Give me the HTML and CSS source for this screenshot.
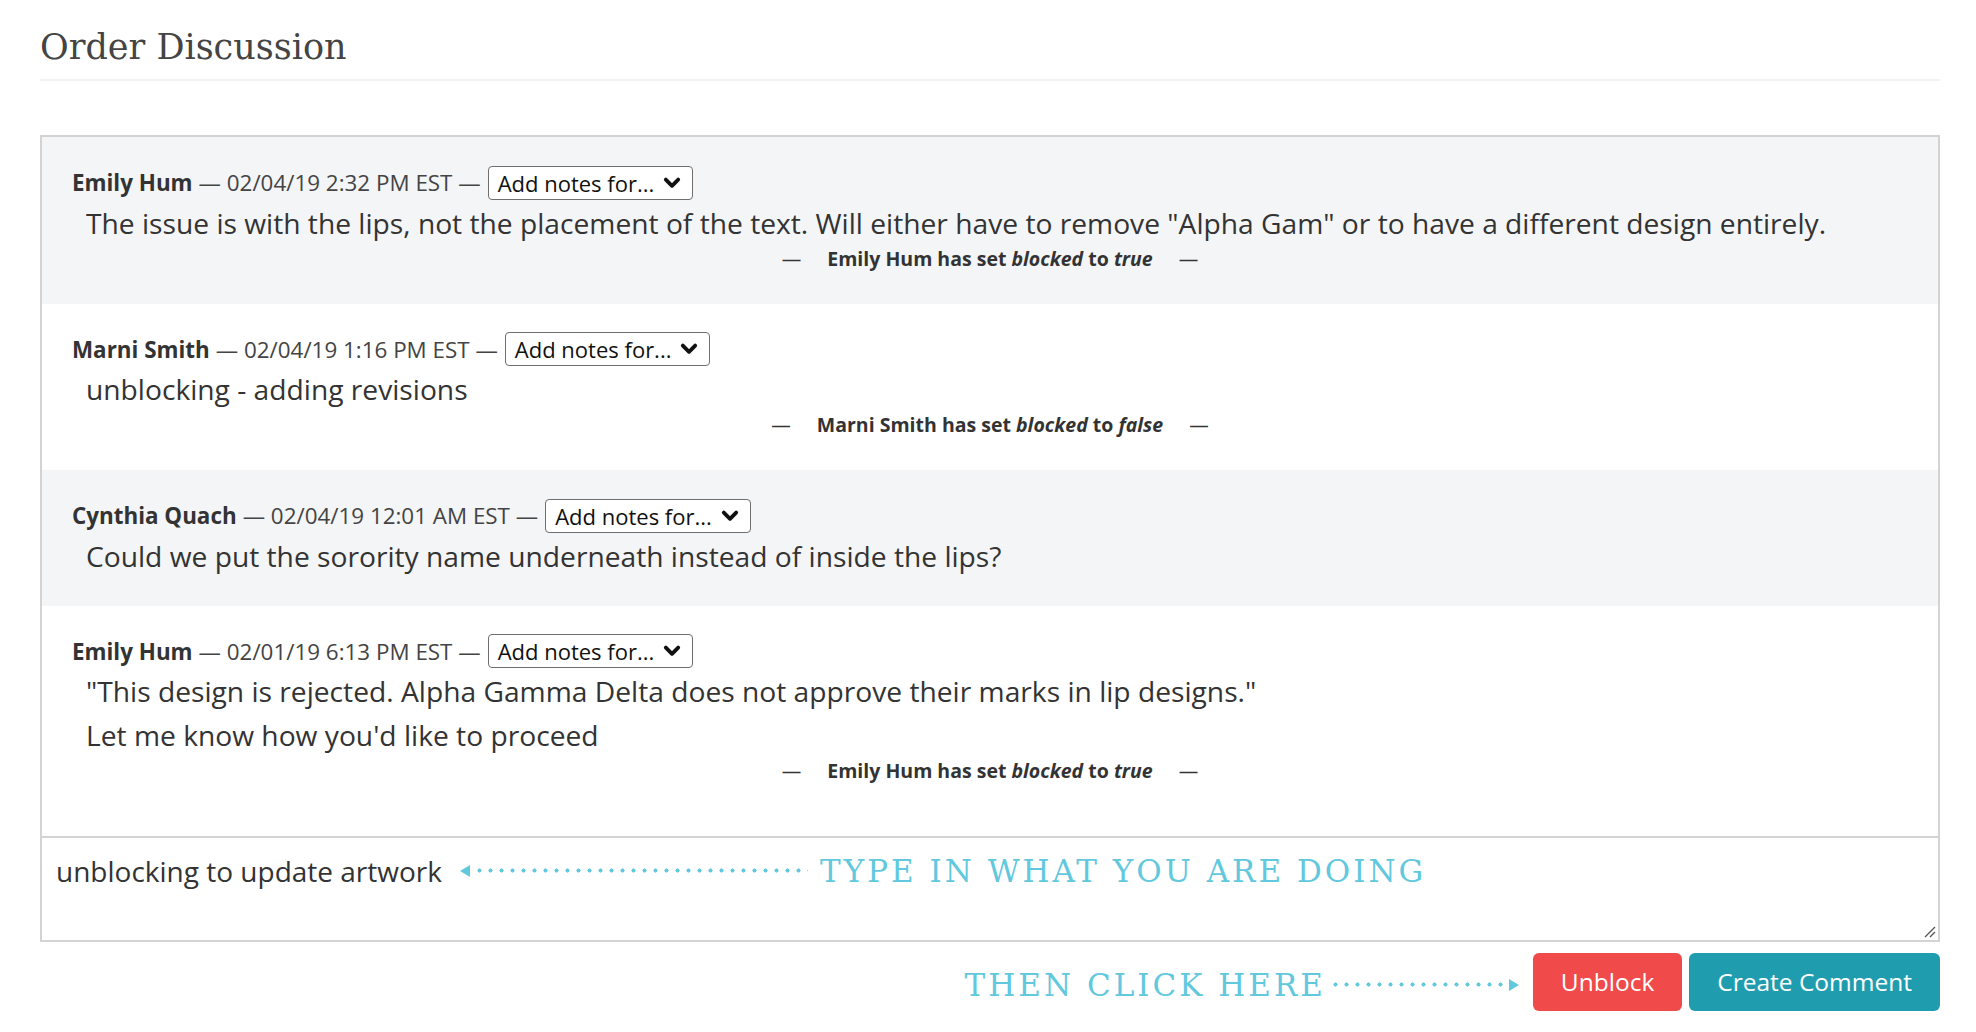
FILE: index.html
```html
<!DOCTYPE html>
<html lang="en">

<head>
    <meta charset="UTF-8">
    <title>Order Discussion</title>
    <link rel="stylesheet" href="styles.css">
</head>

<body>

    <section class="page">
        <h2 class="title">Order Discussion</h2>

        <div class="thread">
            <div class="comments">
                <div class="comment shaded">
                    <div class="meta">
                        <b>Emily Hum</b>
                        <span class="stamp">— 02/04/19 2:32 PM EST —</span>
                        <div class="notes">Add notes for...
                            <svg viewBox="0 0 16 16"><path d="M2.5 5 L8 10.5 L13.5 5" /></svg>
                        </div>
                    </div>
                    <p class="text">The issue is with the lips, not the placement of the text. Will either have to remove "Alpha Gam" or to have a different design entirely.</p>
                    <p class="status"><span class="dash">—</span>Emily Hum has set <i>blocked</i> to <i>true</i><span class="dash">—</span></p>
                </div>

                <div class="comment">
                    <div class="meta">
                        <b>Marni Smith</b>
                        <span class="stamp">— 02/04/19 1:16 PM EST —</span>
                        <div class="notes">Add notes for...
                            <svg viewBox="0 0 16 16"><path d="M2.5 5 L8 10.5 L13.5 5" /></svg>
                        </div>
                    </div>
                    <p class="text">unblocking - adding revisions</p>
                    <p class="status"><span class="dash">—</span>Marni Smith has set <i>blocked</i> to <i>false</i><span class="dash">—</span></p>
                </div>

                <div class="comment shaded">
                    <div class="meta">
                        <b>Cynthia Quach</b>
                        <span class="stamp">— 02/04/19 12:01 AM EST —</span>
                        <div class="notes">Add notes for...
                            <svg viewBox="0 0 16 16"><path d="M2.5 5 L8 10.5 L13.5 5" /></svg>
                        </div>
                    </div>
                    <p class="text">Could we put the sorority name underneath instead of inside the lips?</p>
                </div>

                <div class="comment">
                    <div class="meta">
                        <b>Emily Hum</b>
                        <span class="stamp">— 02/01/19 6:13 PM EST —</span>
                        <div class="notes">Add notes for...
                            <svg viewBox="0 0 16 16"><path d="M2.5 5 L8 10.5 L13.5 5" /></svg>
                        </div>
                    </div>
                    <p class="text">"This design is rejected. Alpha Gamma Delta does not approve their marks in lip designs."<br>Let me know how you'd like to proceed</p>
                    <p class="status"><span class="dash">—</span>Emily Hum has set <i>blocked</i> to <i>true</i><span class="dash">—</span></p>
                </div>
            </div>

            <div class="compose">
                <textarea class="reply">unblocking to update artwork</textarea>
                <div class="hint hint-type">
                    <span class="head-left"></span>
                    <span class="dots"></span>
                    <span class="hint-label">Type in what you are doing</span>
                </div>
                <svg class="grip" viewBox="0 0 14 14"><path d="M13 3 L3 13 M13 8 L8 13" /></svg>
            </div>
        </div>

        <div class="actions">
            <div class="hint">
                <span class="hint-label">Then click here</span>
                <span class="dots short"></span>
                <span class="head-right"></span>
            </div>
            <button class="btn unblock-btn">Unblock</button>
            <button class="btn create-btn">Create Comment</button>
        </div>
    </section>

</body>

</html>
```

FILE: styles.css
```css
* {
    box-sizing: border-box;
}

body {
    margin: 0;
    background: #fff;
    color: #333;
    font-family: 'Open Sans', sans-serif;
}

.page {
    padding: 27px 36px 0 40px;
}

.title {
    margin: 0;
    font-family: 'DejaVu Serif', serif;
    font-weight: normal;
    font-size: 35px;
    line-height: 40px;
    color: #444;
    padding-bottom: 12px;
    border-bottom: 2px solid #f2f2f2;
}

.thread {
    margin-top: 54px;
    border: 2px solid #d3d3d3;
}

.comments {
    padding-bottom: 19.5px;
}

.comment {
    padding: 27.5px 30px 28px;
}

.comment.shaded {
    background: #f4f5f7;
}

.meta {
    display: flex;
    align-items: center;
    height: 36px;
    font-size: 22.4px;
    color: #444;
}

.meta b {
    color: #333;
    margin-right: 6px;
}

.stamp {
    margin-right: 7px;
}

.notes {
    display: flex;
    align-items: center;
    height: 34px;
    padding: 0 11px 0 9px;
    background: #fff;
    border: 1.5px solid #6f6f6f;
    border-radius: 4px;
    font-size: 22px;
    color: #111;
}

.notes svg {
    width: 18px;
    height: 18px;
    margin-left: 9px;
    fill: none;
    stroke: #111;
    stroke-width: 3.4;
    stroke-linecap: round;
    stroke-linejoin: round;
}

.text {
    margin: 0;
    padding-left: 14px;
    font-size: 28.2px;
    line-height: 44px;
    color: #333;
}

.status {
    margin: 0 0 3px;
    text-align: center;
    font-size: 19.5px;
    font-weight: bold;
    line-height: 28px;
    color: #333;
}

.status .dash {
    font-weight: normal;
    margin: 0 26px;
}

.compose {
    position: relative;
}

.reply {
    display: block;
    width: 100%;
    height: 104px;
    margin: 0;
    padding: 14px 14px;
    border: none;
    border-top: 2px solid #d3d3d3;
    font-family: 'Open Sans', sans-serif;
    font-size: 28px;
    line-height: 38px;
    color: #333;
    resize: none;
    outline: none;
}

.grip {
    position: absolute;
    right: 2px;
    bottom: 2px;
    width: 14px;
    height: 14px;
    fill: none;
    stroke: #555;
    stroke-width: 1.3;
}

.hint {
    display: flex;
    align-items: center;
    color: #62c8de;
}

.hint-type {
    position: absolute;
    left: 418px;
    top: 17px;
    height: 36px;
}

.hint-label {
    font-family: 'DejaVu Serif', serif;
    font-size: 31px;
    letter-spacing: 3px;
    text-transform: uppercase;
    white-space: nowrap;
}

.dots {
    display: block;
    width: 334px;
    height: 5px;
    margin: 0 12px 0 4px;
    background: radial-gradient(circle, #62c8de 1.8px, transparent 2.3px) 0 0 / 11px 5px repeat-x;
}

.dots.short {
    width: 177px;
    margin: 0 2px 0 4px;
}

.head-left {
    width: 0;
    height: 0;
    border-right: 10px solid #62c8de;
    border-top: 6px solid transparent;
    border-bottom: 6px solid transparent;
}

.head-right {
    width: 0;
    height: 0;
    border-left: 10px solid #62c8de;
    border-top: 6px solid transparent;
    border-bottom: 6px solid transparent;
    margin-right: 14px;
}

.actions .hint {
    padding-top: 6px;
}

.actions {
    display: flex;
    justify-content: flex-end;
    align-items: center;
    margin-top: 11px;
}

.btn {
    height: 58px;
    padding: 0 28px;
    border: none;
    border-radius: 6px;
    color: #fff;
    font-family: 'Open Sans', sans-serif;
    font-size: 24.5px;
    cursor: pointer;
}

.unblock-btn {
    background: #f04a4a;
    margin-right: 7px;
}

.create-btn {
    background: #1f9daf;
}
```
